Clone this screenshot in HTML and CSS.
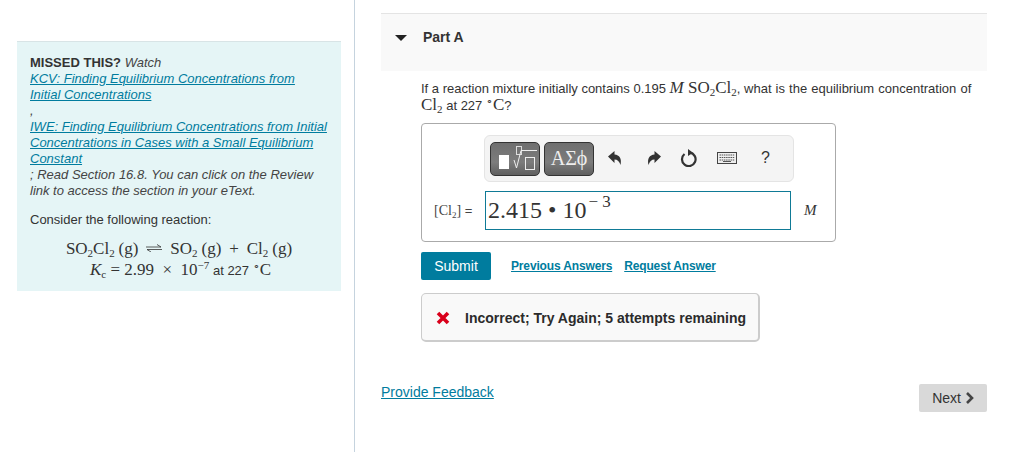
FILE: index.html
```html
<!DOCTYPE html>
<html lang="en">
<head>
<meta charset="utf-8">
<title>Part A</title>
<link rel="stylesheet" href="styles.css">
</head>
<body>
<div class="page">
  <aside class="left">
    <div class="panel">
      <p class="hint"><b>MISSED THIS?</b> <i>Watch</i><br>
      <a href="#"><i>KCV: Finding Equilibrium Concentrations from Initial Concentrations</i></a><br>
      <i class="plain">,</i><br>
      <a href="#"><i>IWE: Finding Equilibrium Concentrations from Initial Concentrations in Cases with a Small Equilibrium Constant</i></a><br>
      <i class="plain">; Read Section 16.8. You can click on the Review link to access the section in your eText.</i></p>
      <p class="consider">Consider the following reaction:</p>
      <div class="eq">
        <div class="eq1"><span class="m">SO<sub>2</sub>Cl<sub>2</sub> (g)</span>
          <svg class="arrows" width="16" height="8" viewBox="0 0 16 8"><path d="M0 3h15M11 .5L15 3M16 5.500H1M5 8L1 5.500" fill="none" stroke="#333" stroke-width=".8"/></svg>
          <span class="m">SO<sub>2</sub> (g) &nbsp;+&nbsp; Cl<sub>2</sub> (g)</span></div>
        <div class="eq2"><span class="m"><i>K</i><sub>c</sub> = 2.99 &nbsp;× &nbsp;10<sup>−7</sup></span> at 227 <span class="m"><sup class="deg">∘</sup>C</span></div>
      </div>
    </div>
  </aside>
  <main class="right">
    <header class="part-head">
      <span class="tri"></span>
      <h2>Part A</h2>
    </header>
    <div class="body">
      <p class="question">If a reaction mixture initially contains 0.195 <span class="m big"><i>M</i> SO<sub>2</sub>Cl<sub>2</sub></span>, <span class="tail">what is the equilibrium concentration of</span> <span class="m big">Cl<sub>2</sub></span> at 227 <span class="m big"><sup class="deg">∘</sup>C</span>?</p>
      <div class="answer-box">
        <div class="toolbar">
          <button class="tool" type="button" aria-label="Templates">
            <svg width="46" height="30" viewBox="0 0 46 30">
              <rect x="7" y="11" width="10" height="14" fill="#fff"/>
              <rect x="24.500" y="2.500" width="5" height="8" fill="none" stroke="#ddd"/>
              <path d="M22 16l2.500 8L29 6.500h16" fill="none" stroke="#eee"/>
              <rect x="33.500" y="13.500" width="9" height="12" fill="none" stroke="#eee"/>
            </svg>
          </button>
          <button class="tool greek" type="button">ΑΣϕ</button>
          <div class="icons">
            <svg width="16" height="16" viewBox="0 0 16 16"><path d="M1 6.500L7.500 1v3.500c5 .5 7.500 4 6 10.500-1-3.500-3-5.500-6-5.500V13z" fill="#333"/></svg>
            <svg width="16" height="16" viewBox="0 0 16 16"><path d="M15 6.500L8.500 1v3.500c-5 .5-7.500 4-6 10.500 1-3.500 3-5.500 6-5.500V13z" fill="#333"/></svg>
            <svg width="18" height="18" viewBox="0 0 18 18"><path d="M10 3.600A6.800 6.800 0 1 1 4.500 5" fill="none" stroke="#333" stroke-width="2.200"/><path d="M8 0L13 3.800 8 7z" fill="#333"/></svg>
            <svg width="20" height="12" viewBox="0 0 20 12"><rect x=".5" y=".5" width="19" height="11" fill="#eee" stroke="#444"/><path d="M2.500 3h15M2.500 5.500h15M2.500 8h15" stroke="#555" stroke-dasharray="1.500 .7"/><path d="M6 9.500h8" stroke="#555"/></svg>
            <span class="help">?</span>
          </div>
        </div>
        <div class="input-row">
          <span class="label"><span class="m">[Cl<sub>2</sub>]</span> =</span>
          <div class="input"><span>2.415 • 10</span><sup>− 3</sup></div>
          <span class="unit">M</span>
        </div>
      </div>
      <div class="actions">
        <button class="submit" type="button">Submit</button>
        <a href="#" class="act">Previous Answers</a>
        <a href="#" class="act">Request Answer</a>
      </div>
      <div class="feedback">
        <svg width="14" height="14" viewBox="0 0 14 14"><path d="M2 2l10 10M12 2L2 12" stroke="#d9001b" stroke-width="3.600"/></svg>
        <span>Incorrect; Try Again; 5 attempts remaining</span>
      </div>
    </div>
    <footer class="foot">
      <a href="#" class="provide">Provide Feedback</a>
      <button class="next" type="button">Next <svg width="9" height="12" viewBox="0 0 9 12"><path d="M2 1l5 5-5 5" fill="none" stroke="#444" stroke-width="2.600"/></svg></button>
    </footer>
  </main>
</div>
</body>
</html>
```

FILE: styles.css
```css
* { box-sizing: border-box; }
html, body { margin: 0; padding: 0; background: #fff; }
body { font-family: "Liberation Sans", Arial, sans-serif; font-size: 13px; color: #333; overflow: hidden; }
.page { display: flex; width: 1018px; height: 452px; }
a { color: #007c9e; }
p { margin: 0; }

.left { width: 355px; flex: none; height: 452px; border-right: 1px solid #c5d3de; padding: 41px 13px 0 17px; }
.panel { width: 324px; height: 250px; background: #e5f5f6; border-top: 1px solid #d8e4e6; padding: 13px 13px 0 13px; }
.hint { line-height: 16px; }
.hint b { font-weight: 700; }
.hint .plain, .hint > i { color: #444; }
.consider { margin-top: 13px; line-height: 16px; }
.eq { margin-top: 11px; font-family: "Liberation Serif", serif; font-size: 17px; color: #333; text-align: center; padding-left: 0; }
.eq1, .eq2 { line-height: 20px; white-space: nowrap; }
.eq1 { word-spacing: -.3px; }
.eq2 { margin-top: 1px; padding-left: 3px; font-family: "Liberation Sans", sans-serif; font-size: 13px; }
.eq2 .m { font-size: 17px; }
.m { font-family: "Liberation Serif", serif; }
.m sub { font-size: 11px; line-height: 0; vertical-align: -3px; }
.m sup { font-size: 11px; line-height: 0; vertical-align: 6px; }
.arrows { margin: 0 4px; vertical-align: 2px; }
.m .deg { vertical-align: 5px; }

.right { flex: none; width: 606px; margin-left: 26px; }
.part-head { margin-top: 13px; height: 58px; background: #f9f9f9; border-top: 1px solid #e4e4e4; display: flex; padding: 16px 0 0 14px; }
.tri { width: 0; height: 0; margin-top: 5px; border-left: 6px solid transparent; border-right: 6px solid transparent; border-top: 6px solid #222; }
.part-head h2 { margin: 0 0 0 16px; font-size: 14px; font-weight: 700; color: #333; line-height: 14px; }

.body { padding: 9px 0 0 40px; }
.question { width: 560px; line-height: 16px; }
.tail { word-spacing: .5px; }
.big { font-size: 17px; }

.answer-box { margin-top: 9px; width: 415px; height: 119px; border: 1px solid #aaa; border-radius: 4px; padding: 11px 0 0 10px; }
.toolbar { margin-left: 52px; width: 310px; height: 47px; background: #f4f4f4; border: 1px solid #e4e4e4; border-radius: 6px; display: flex; align-items: center; padding-left: 5px; gap: 4px; }
.tool { width: 50px; height: 34px; padding: 0; border: 1px solid #333; border-radius: 5px; background: linear-gradient(#6f6f6f, #7c7c7c 60%, #5f5f5f); color: #eee; font-family: "Liberation Serif", serif; font-size: 20px; display: flex; align-items: center; justify-content: center; }
.icons { display: flex; align-items: center; margin-left: 9px; margin-top: -2px; }
.icons svg:nth-child(1) { margin-right: 23px; }
.icons svg:nth-child(2) { margin-right: 18px; }
.icons svg:nth-child(3) { margin-right: 19px; }
.icons svg:nth-child(4) { margin-right: 24px; }
.help { font-size: 16px; color: #333; }
.input-row { display: flex; align-items: center; margin-top: 9px; }
.label { width: 53px; padding-left: 2px; font-size: 13px; color: #444; white-space: nowrap; }
.label .m { font-size: 14px; }
.label sub { font-size: 9px; }
.input { width: 306px; height: 39px; border: 1px solid #0f7a96; padding-left: 2px; font-family: "Liberation Serif", serif; font-size: 24px; line-height: 37px; color: #333; white-space: nowrap; }
.input sup { font-size: 17px; line-height: 0; vertical-align: 11px; margin-left: 2px; }
.unit { margin-left: 13px; font-family: "Liberation Serif", serif; font-style: italic; font-size: 15px; }

.actions { display: flex; align-items: center; margin-top: 10px; }
.submit { width: 70px; height: 28px; padding: 0; background: #007c9e; color: #fff; border: 0; border-radius: 2px; font-family: "Liberation Sans", sans-serif; font-size: 14px; }
.act { font-size: 12px; letter-spacing: -.15px; font-weight: 700; margin-left: 12px; }
.submit + .act { margin-left: 20px; }

.feedback { margin-top: 13px; width: 339px; height: 49px; background: #f9f9f9; border: 1px solid #ccc; border-bottom-width: 2px; border-right-width: 2px; border-radius: 5px; display: flex; align-items: center; padding: 2px 0 0 14px; gap: 15px; font-size: 14px; font-weight: 700; color: #2b2b2b; white-space: nowrap; }

.foot { display: flex; justify-content: space-between; align-items: flex-start; margin-top: 42px; }
.provide { font-size: 14px; line-height: 16px; }
.next { width: 68px; height: 28px; padding: 0; background: #d9d9d9; border: 0; border-radius: 2px; color: #333; font-family: "Liberation Sans", sans-serif; font-size: 14px; }
.next svg { vertical-align: -1px; }
```
